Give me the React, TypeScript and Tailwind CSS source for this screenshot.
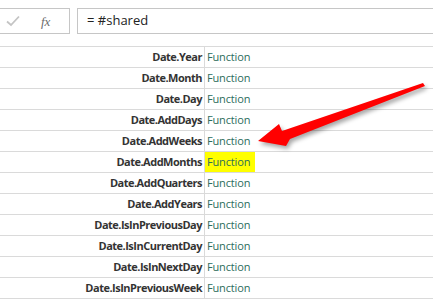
import React from "react";

const rows = [
  "Date.Year",
  "Date.Month",
  "Date.Day",
  "Date.AddDays",
  "Date.AddWeeks",
  "Date.AddMonths",
  "Date.AddQuarters",
  "Date.AddYears",
  "Date.IsInPreviousDay",
  "Date.IsInCurrentDay",
  "Date.IsInNextDay",
  "Date.IsInPreviousWeek",
];

export default function App() {
  return (
    <div
      className="relative w-[433px] h-[301px] overflow-hidden bg-white"
      style={{ fontFamily: '"Open Sans", "Noto Sans", sans-serif' }}
    >
      {/* formula bar */}
      <div className="flex items-stretch h-[26px] mt-[8px] gap-[7px]">
        <div className="w-[70px] border border-l-0 border-[#c6c6c6] flex items-center">
          <svg width="14" height="12" viewBox="0 0 14 12" className="ml-[6px]">
            <path d="M1 6.5 L5 10 L13 1.5" fill="none" stroke="#c4c4c4" strokeWidth="1.8" />
          </svg>
          <span
            className="ml-[21px] text-[13px] italic text-[#6b6b6b] leading-none"
            style={{ fontFamily: '"Liberation Serif", serif' }}
          >
            fx
          </span>
        </div>
        <div className="flex-1 border border-r-0 border-[#c6c6c6] flex items-center pl-[9px] text-[13px] text-[#222]">
          = #shared
        </div>
      </div>

      {/* table */}
      <div className="mt-[12px] border-t border-[#dadada]">
        {rows.map((r, i) => (
          <div key={r} className="flex h-[21px] border-b border-[#dadada]">
            <div className="w-[205px] border-r border-[#dadada] flex items-center justify-end pr-[2px] pt-[1px] text-[11px] font-bold text-[#333] tracking-[-0.5px]">
              {r}
            </div>
            <div className="flex items-center">
              <span
                className={
                  "text-[11px] text-[#2c6d5c] pl-[2px] leading-[20px] tracking-[-0.15px] " +
                  (i === 5 ? "bg-[#ffff00] pr-[5px]" : "")
                }
              >
                Function
              </span>
            </div>
          </div>
        ))}
      </div>

      {/* arrow */}
      <svg
        className="absolute left-0 top-0 pointer-events-none"
        width="433"
        height="301"
        style={{ filter: "drop-shadow(2px 3px 2px rgba(0,0,0,0.35))" }}
      >
        <polygon
          points="258,141 279,124 282,131 423,83 425,86 290,139 286,146"
          fill="#ff0000"
        />
      </svg>
    </div>
  );
}
